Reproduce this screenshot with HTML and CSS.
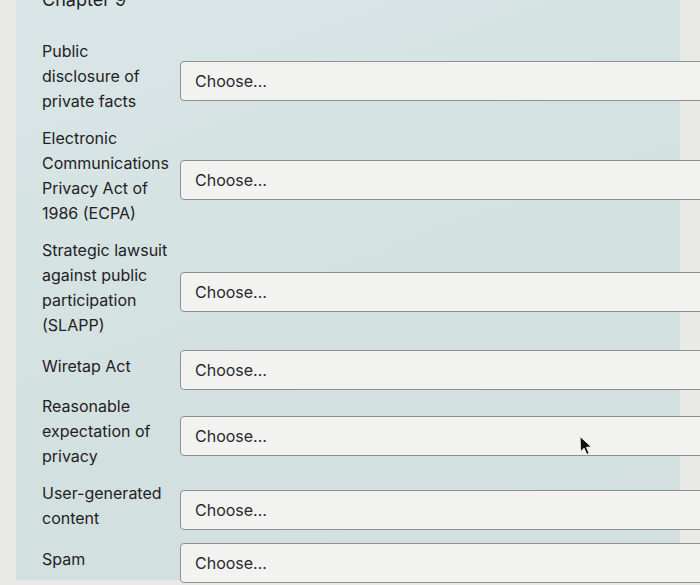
FILE: index.html
```html
<!DOCTYPE html>
<html>
  <head>
    <title>Chapter 9</title>
    <link rel="stylesheet" href="styles.css">
  </head>
  <body>
    <div class="panel">
      <h3 class="chapter">Chapter 9</h3>
      <div class="matches">
        <div class="match-row">
          <label class="term">Public disclosure of private facts</label>
          <select class="choice"><option>Choose...</option></select>
        </div>
        <div class="match-row">
          <label class="term">Electronic Communications Privacy Act of 1986 (ECPA)</label>
          <select class="choice"><option>Choose...</option></select>
        </div>
        <div class="match-row">
          <label class="term">Strategic lawsuit against public participation (SLAPP)</label>
          <select class="choice"><option>Choose...</option></select>
        </div>
        <div class="match-row">
          <label class="term">Wiretap Act</label>
          <select class="choice"><option>Choose...</option></select>
        </div>
        <div class="match-row">
          <label class="term">Reasonable expectation of privacy</label>
          <select class="choice"><option>Choose...</option></select>
        </div>
        <div class="match-row">
          <label class="term"><span class="nowrap">User-generated</span> content</label>
          <select class="choice"><option>Choose...</option></select>
        </div>
        <div class="match-row">
          <label class="term">Spam</label>
          <select class="choice"><option>Choose...</option></select>
        </div>
      </div>
    </div>
    <!-- mouse pointer sitting over the fifth dropdown -->
    <svg class="cursor" xmlns="http://www.w3.org/2000/svg" width="16" height="22" viewBox="0 0 16 22">
      <path d="M2 1.5 L2.5 17 L6 13.2 L8.8 19.5 L11.2 18.4 L8.5 12.3 L13.5 12 Z" fill="#111" stroke="#f4f4f4" stroke-width="1" stroke-linejoin="round" />
    </svg>
  </body>
</html>
```

FILE: styles.css
```css
html,
body {
  margin: 0;
  height: 100%;
  overflow: hidden;
}
body {
  position: relative;
  background: #e9eae8;
  font-family: Inter, "Liberation Sans", Arial, sans-serif;
  color: #1f2224;
}
.panel {
  display: flow-root;
  box-sizing: border-box;
  margin-left: 16px;
  width: 664px;
  height: 580px;
  padding-left: 26px;
  background: linear-gradient(160deg, #d9e5e6 0%, #d3e0e0 60%, #d2dfde 100%);
}
.chapter {
  margin: -12px 0 27px;
  font-size: 18px;
  line-height: 24px;
  font-weight: 400;
}
.matches {
  display: flex;
  flex-direction: column;
  gap: 4px;
}
.match-row {
  display: flex;
  align-items: center;
  gap: 10px;
}
.term {
  flex: none;
  width: 128px;
  padding-bottom: 8px;
  font-size: 16px;
  line-height: 25px;
}
.nowrap {
  white-space: nowrap;
}
.choice {
  flex: none;
  width: 560px;
  height: 40px;
  padding: 0 14px;
  -webkit-appearance: none;
  appearance: none;
  background: #f2f2f1;
  border: 1.5px solid #8d9192;
  border-radius: 4px;
  font-family: Inter, "Liberation Sans", Arial, sans-serif;
  font-size: 16px;
  color: #26292b;
}
.cursor {
  position: absolute;
  left: 578px;
  top: 435px;
}
```
